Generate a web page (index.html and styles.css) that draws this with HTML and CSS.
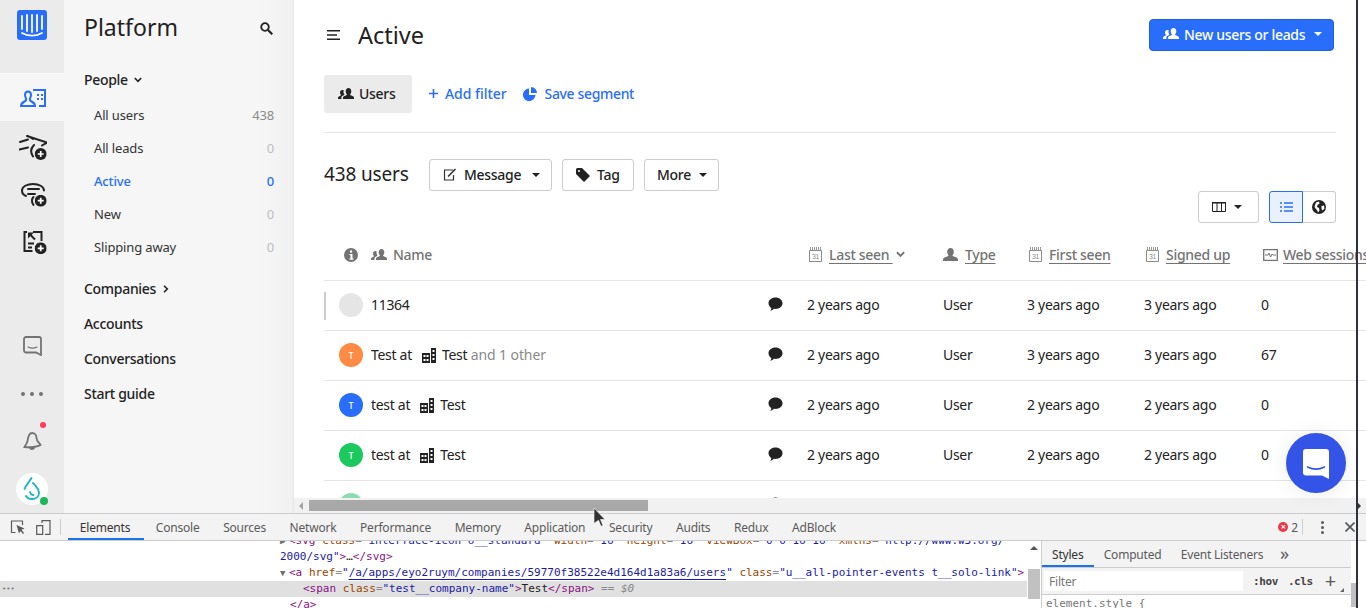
FILE: index.html
```html
<!DOCTYPE html>
<html lang="en">
<head>
<meta charset="utf-8">
<title>Active users</title>
<link rel="stylesheet" href="styles.css">
</head>
<body>
<svg class="defs" width="0" height="0" aria-hidden="true">
  <symbol id="i-users" viewBox="0 0 16 12"><path d="M10.5 0c1.7 0 2.8 1.3 2.8 3.2 0 1.2-.5 2.3-1.2 3 0 .7.4 1 1.2 1.3 1.4.5 2.7 1 2.7 2.3V11H5v-1.2c0-1.3 1.300-1.800 2.700-2.300.8-.3 1.200-.6 1.200-1.300-.7-.7-1.200-1.800-1.200-3C7.700 1.300 8.800 0 10.500 0zM4.300 2c.5 0 1 .1 1.400.4-.5 1.500-.1 3.100.8 4.200-.2.500-1 .8-1.900 1.200C3.500 8.300 3 9.300 3.600 11H0V9.700c0-1 .9-1.400 2-1.800.6-.2.900-.5.900-1C2.300 6.300 2 5.400 2 4.500 2 3 2.900 2 4.300 2z"/></symbol>
  <symbol id="i-cal" viewBox="0 0 13 15"><path fill="none" stroke="currentColor" d="M.5 3.500h12v11H.5z"/><path stroke="currentColor" stroke-width=".9" d="M1.500 0v4M3.500 0v4M5.500 0v4M7.500 0v4M9.500 0v4M11.500 0v4"/><text x="6.500" y="12.300" font-size="7" text-anchor="middle" fill="currentColor" font-family="Liberation Sans">31</text></symbol>
  <symbol id="i-chat" viewBox="0 0 15 15"><path d="M7.500.5c4 0 7 2.500 7 5.700 0 3.200-3 5.700-7 5.700-.6 0-1.100 0-1.600-.1-.9 1-2.200 1.900-3.600 2.200.5-.8 1-1.900 1-3C1.800 10 .5 8.200.5 6.200.5 3 3.500.5 7.500.5z"/></symbol>
  <symbol id="i-building" viewBox="0 0 14 15"><path fill-rule="evenodd" d="M0 5h8v10H0zM1.500 7v2h2V7zM4.500 7v2h2V7zM1.500 11v2h2v-2zM4.500 11v2h2v-2zM9 0h5v15H9zM10.500 2v2h2V2zM10.500 6v2h2V6zM10.500 10v2h2v-2z"/></symbol>
  <symbol id="i-plusbadge" viewBox="0 0 14 14"><circle cx="7" cy="7" r="7"/><path stroke="#fff" stroke-width="2" d="M3.500 7h7M7 3.500v7"/></symbol>
</svg>
<div class="app">
  <nav class="rail">
    <div class="rail-logo">
      <svg class="logo" viewBox="0 0 30 30"><rect width="30" height="30" rx="3" fill="#286efa"/><path stroke="#fff" stroke-width="1.800" stroke-linecap="round" fill="none" d="M5 6v13M10 5v16M15 5v17M20 5v16M25 6v13M5 23c6 3.500 14 3.500 20 0"/></svg>
    </div>
    <div class="rail-item is-current">
      <svg class="rail-icon" viewBox="0 0 26 18" fill="none" stroke="#286efa" stroke-width="2"><path d="M13 1h12v16h-6"/><path d="M1 17c0-2.500 1.500-3.500 3.500-4.500 1.500-.7 2-1.500 1.500-3C5.300 8 5 7 5 6c0-2.500 1.500-3.500 3-3.500S11 3.500 11 6c0 1-.3 2-1 3.500-.5 1.500 0 2.300 1.500 3 2 1 3.500 2 3.500 4.500z"/><path d="M17 6h2M21 6h2M17 10h2M21 10h2"/></svg>
    </div>
    <div class="rail-item">
      <svg class="rail-icon-wide" viewBox="0 0 28 25" fill="none" stroke="#222" stroke-width="2"><path stroke-linecap="round" d="M8 1l20 6.500-5 3M9 1l5 3M1 7l8-2.500M.5 14.500l8.500-2M15 10c-3 3-4 7-1 11.500"/><use href="#i-plusbadge" x="15.700" y="13" width="12" height="12" fill="#222" stroke="none"/></svg>
    </div>
    <div class="rail-item">
      <svg class="rail-icon-wide" viewBox="0 0 28 25" fill="none" stroke="#222" stroke-width="2"><path stroke-linecap="round" d="M7 13C4.500 12 3 10 3 7.500 3 3.500 8 1 14 1s11 2.500 11 6.500M9 6h11M9 11h7M14.500 14c-2 2-2 5 0 8"/><use href="#i-plusbadge" x="15.700" y="11.700" width="12" height="12" fill="#222" stroke="none"/></svg>
    </div>
    <div class="rail-item">
      <svg class="rail-icon-wide" viewBox="0 0 28 25" fill="none" stroke="#222" stroke-width="2"><path d="M8 1H5.500v19h8M14 1h8.500v9"/><path fill="#222" stroke="none" d="M9 1.500h6l-6 6z"/><path d="M11 3.500l5 5M9 12.500h6M9 16.500h4"/><use href="#i-plusbadge" x="15.700" y="11.300" width="12" height="12" fill="#222" stroke="none"/></svg>
    </div>
    <div class="rail-item rail-push">
      <svg class="rail-icon-sm rail-icon-chat" viewBox="0 0 19 20" fill="none" stroke="#737373" stroke-width="1.800"><path d="M3 1h13a2 2 0 0 1 2 2v16l-5-2.500H3a2 2 0 0 1-2-2V3a2 2 0 0 1 2-2z"/><path stroke-linecap="round" stroke-width="1.200" d="M5 11c3 1.500 6 1.500 9 0"/></svg>
    </div>
    <div class="rail-item">
      <div class="dots"><span></span><span></span><span></span></div>
    </div>
    <div class="rail-item">
      <div class="bell">
        <svg class="rail-icon-sm" viewBox="0 0 19 20" fill="none" stroke="#737373" stroke-width="1.800"><path d="M9 2c3 0 4.500 2.500 4.500 5 0 3 3 5 4 7-3 2-11 2.500-16 2 1-2 2.500-3.500 3-6 .4-3 1.500-8 4.500-8z"/><path fill="#737373" stroke="none" d="M6 16.500h6c0 1.500-1.300 2.500-3 2.500s-3-1-3-2.500z"/></svg>
        <span class="bell-dot"></span>
      </div>
    </div>
    <div class="rail-item">
      <div class="me">
        <svg class="me-drop" viewBox="0 0 18 24" fill="none" stroke="#1cb5c4" stroke-width="1.800"><path stroke-linecap="round" d="M8.500 1C7 4 3 8 1.500 12M10 6c3 3 6 6 6 10 0 4-3.500 6-7 6-2.500 0-5-1-6-3M7 15c.5 2 1.500 3 3.500 3"/></svg>
        <span class="me-dot"></span>
      </div>
    </div>
  </nav>
  <aside class="side">
    <div class="side-head">
      <h2 class="side-title">Platform</h2>
      <svg class="side-search" viewBox="0 0 13 13" fill="none" stroke="#222" stroke-width="1.800"><circle cx="5" cy="5" r="3.800"/><path stroke-width="2.200" d="M8 8l4.300 4.300"/></svg>
    </div>
    <div class="side-group side-group-open">People <svg class="chev" viewBox="0 0 8 6"><path fill="none" stroke="#222" stroke-width="1.600" d="M.8 1L4 4.300 7.200 1"/></svg></div>
    <ul class="side-list">
      <li class="side-row"><span>All users</span><span class="count count-strong">438</span></li>
      <li class="side-row"><span>All leads</span><span class="count">0</span></li>
      <li class="side-row is-active"><span>Active</span><span class="count">0</span></li>
      <li class="side-row"><span>New</span><span class="count">0</span></li>
      <li class="side-row"><span>Slipping away</span><span class="count">0</span></li>
    </ul>
    <div class="side-group side-group-first">Companies <svg class="chev chev-right" viewBox="0 0 6 8"><path fill="none" stroke="#222" stroke-width="1.600" d="M1 .8L4.300 4 1 7.200"/></svg></div>
    <div class="side-group">Accounts</div>
    <div class="side-group">Conversations</div>
    <div class="side-group">Start guide</div>
  </aside>
  <main class="main">
    <div class="content">
      <header class="top">
        <svg class="menu" viewBox="0 0 13 10"><path stroke="#222" stroke-width="1.500" d="M0 .8h13M0 5h10M0 9.200h13"/></svg>
        <h1 class="page-title">Active</h1>
        <button class="btn-primary"><svg class="ic-users-w"><use href="#i-users"/></svg>New users or leads<span class="caret caret-white"></span></button>
      </header>
      <div class="filters">
        <div class="pill"><svg class="ic-users"><use href="#i-users"/></svg>Users</div>
        <a class="link link-add"><svg class="ic-plus" viewBox="0 0 9 9"><path stroke="#286efa" stroke-width="1.600" d="M0 4.500h9M4.500 0v9"/></svg>Add filter</a>
        <a class="link link-save"><svg class="ic-pie" viewBox="0 0 14 14"><path fill="#286efa" d="M6 1.500V8h6.500A6.300 6.300 0 1 1 6 1.500zM8 0a6.200 6.200 0 0 1 6 6H8z"/></svg>Save segment</a>
      </div>
      <div class="bar">
        <span class="total">438 users</span>
        <button class="btn btn-message"><svg class="ic-edit" viewBox="0 0 14 13" fill="none" stroke="#333" stroke-width="1.200"><path d="M10 2H1.500v10h9V7"/><path stroke-width="1.600" d="M5 8.500l7.500-7.500"/></svg>Message<span class="caret"></span></button>
        <button class="btn btn-tag"><svg class="ic-tag" viewBox="0 0 14 14"><path fill="#222" fill-rule="evenodd" d="M0 1.500A1.500 1.500 0 0 1 1.500 0H6l8 8-6 6-8-8zM3 2a1 1 0 1 0 0 2 1 1 0 0 0 0-2z"/></svg>Tag</button>
        <button class="btn btn-more">More<span class="caret"></span></button>
      </div>
      <div class="views">
        <button class="btn btn-cols"><svg class="ic-cols" viewBox="0 0 14 10" fill="none" stroke="#222"><path d="M.5.500h13v9H.5zM5 .5v9M9.500.5v9"/><path stroke-width="1.500" d="M0 .8h14"/></svg><span class="caret"></span></button>
        <div class="toggle">
          <span class="toggle-on"><svg class="ic-list" viewBox="0 0 13 10"><path stroke="#286efa" stroke-width="1.500" d="M0 1h2M4 1h9M0 5h2M4 5h9M0 9h2M4 9h9"/></svg></span>
          <span class="toggle-off"><svg class="ic-globe" viewBox="0 0 14 14"><circle cx="7" cy="7" r="7" fill="#222"/><path fill="#fff" d="M4 2.500l3-1 .5 2-2 1.500-.5 2 2 1 .5 2.500-1.500 2-1-2.500-1.500-1.500-1-2zM9.500 6l2.500-.5.500 3-2 2-1-1.500z"/></svg></span>
        </div>
      </div>
      <div class="table">
        <div class="tr th">
          <div class="c-name th-name">
            <svg class="ic-info" viewBox="0 0 14 14"><circle cx="7" cy="7" r="7" fill="#737373"/><path fill="#fff" d="M7 2.200a1.200 1.200 0 1 1 0 2.500 1.200 1.200 0 0 1 0-2.500zM5.500 6h3v4.500h1v1.300h-4v-1.300h1V7.300h-1z"/></svg>
            <svg class="ic-users ic-users-grey"><use href="#i-users"/></svg>Name
          </div>
          <div class="c-chat"></div>
          <div class="c-col"><svg class="ic-cal"><use href="#i-cal"/></svg><u>Last seen&nbsp;</u><svg class="chev chev-th" viewBox="0 0 8 6"><path fill="none" stroke="#737373" stroke-width="1.600" d="M.8 1L4 4.300 7.200 1"/></svg></div>
          <div class="c-col"><svg class="ic-user" viewBox="0 0 15 13"><path fill="#737373" d="M7.500 0c2 0 3.300 1.500 3.300 3.700 0 1.300-.5 2.600-1.300 3.400 0 .8.500 1.100 1.400 1.500C12.700 9.200 15 9.800 15 11.500V13H0v-1.500C0 9.800 2.300 9.200 4.100 8.600c.9-.4 1.400-.7 1.400-1.500-.8-.8-1.300-2.100-1.300-3.400C4.200 1.500 5.500 0 7.500 0z"/></svg><u>Type</u></div>
          <div class="c-col"><svg class="ic-cal"><use href="#i-cal"/></svg><u>First seen</u></div>
          <div class="c-col"><svg class="ic-cal"><use href="#i-cal"/></svg><u>Signed up</u></div>
          <div class="c-col"><svg class="ic-sess" viewBox="0 0 15 12" fill="none" stroke="#737373"><path stroke-width="1.300" d="M.7.700h13.600v10.600H.7z"/><path d="M2 6h3l1-2 1.500 4L9 5l1 1h3"/></svg><u>Web sessions</u></div>
        </div>
        <div class="tr tr-marked">
          <div class="c-name"><span class="av av-empty"></span>11364</div>
          <div class="c-chat"><svg class="ic-chat"><use href="#i-chat"/></svg></div>
          <div>2 years ago</div><div>User</div><div>3 years ago</div><div>3 years ago</div><div>0</div>
        </div>
        <div class="tr">
          <div class="c-name"><span class="av av-orange">T</span>Test at<svg class="ic-bld"><use href="#i-building"/></svg>Test<span class="muted">&nbsp;and 1 other</span></div>
          <div class="c-chat"><svg class="ic-chat"><use href="#i-chat"/></svg></div>
          <div>2 years ago</div><div>User</div><div>3 years ago</div><div>3 years ago</div><div>67</div>
        </div>
        <div class="tr">
          <div class="c-name"><span class="av av-blue">T</span>test at<svg class="ic-bld"><use href="#i-building"/></svg>Test</div>
          <div class="c-chat"><svg class="ic-chat"><use href="#i-chat"/></svg></div>
          <div>2 years ago</div><div>User</div><div>2 years ago</div><div>2 years ago</div><div>0</div>
        </div>
        <div class="tr">
          <div class="c-name"><span class="av av-green">T</span>test at<svg class="ic-bld"><use href="#i-building"/></svg>Test</div>
          <div class="c-chat"><svg class="ic-chat"><use href="#i-chat"/></svg></div>
          <div>2 years ago</div><div>User</div><div>2 years ago</div><div>2 years ago</div><div>0</div>
        </div>
        <div class="tr">
          <div class="c-name"><span class="av av-mint"></span></div>
          <div class="c-chat"><svg class="ic-chat"><use href="#i-chat"/></svg></div>
        </div>
      </div>
    </div>
    <div class="hscroll">
      <span class="hs-left"></span>
      <span class="hs-thumb"></span>
      <span class="hs-right"></span>
    </div>
    <div class="launcher">
      <svg class="launcher-ic" viewBox="0 0 28 32"><path fill="#fff" d="M4 1h20a3 3 0 0 1 3 3v27l-7-3.500H4a3 3 0 0 1-3-3V4a3 3 0 0 1 3-3z"/><path fill="none" stroke="#3354e6" stroke-width="1.600" stroke-linecap="round" d="M5.500 19c5.500 2.800 11.500 2.800 17 0"/></svg>
    </div>
  </main>
</div>
<section class="devtools">
  <div class="dt-tabs">
    <svg class="dt-ic dt-ic-a" viewBox="0 0 14 15" fill="none" stroke="#5a5a5a" stroke-width="1.200"><path d="M5 12.500H1V1h11v4"/><path fill="#5a5a5a" stroke="none" d="M6 5l8 3.500-3 1.200L13.500 13l-1 1-2.500-3-1.500 2.500z"/></svg>
    <svg class="dt-ic dt-ic-b" viewBox="0 0 15 15" fill="none" stroke="#5a5a5a" stroke-width="1.200"><path d="M6 3V.7h8v13.600H9"/><path d="M.7 5.700h6v8.600h-6z"/></svg>
    <span class="dt-sep"></span>
    <span class="dt-tab dt-tab-on">Elements</span>
    <span class="dt-tab">Console</span>
    <span class="dt-tab">Sources</span>
    <span class="dt-tab">Network</span>
    <span class="dt-tab">Performance</span>
    <span class="dt-tab">Memory</span>
    <span class="dt-tab">Application</span>
    <span class="dt-tab">Security</span>
    <span class="dt-tab">Audits</span>
    <span class="dt-tab">Redux</span>
    <span class="dt-tab">AdBlock</span>
    <span class="dt-right">
      <span class="dt-err">×</span><span class="dt-errn">2</span>
      <span class="dt-sep dt-sep-r"></span>
      <span class="dt-kebab"><i></i><i></i><i></i></span>
      <svg class="dt-x" viewBox="0 0 10 10"><path stroke="#555" stroke-width="1.600" d="M.5.500l9 9M9.500.5l-9 9"/></svg>
    </span>
  </div>
  <div class="dt-body">
    <div class="dom">
      <div class="dl"><span class="tw">▶</span><span class="tg">&lt;svg</span> <span class="an">class</span><span class="pn">=</span><span class="av2">"interface-icon o__standard"</span> <span class="an">width</span><span class="pn">=</span><span class="av2">"16"</span> <span class="an">height</span><span class="pn">=</span><span class="av2">"16"</span> <span class="an">viewBox</span><span class="pn">=</span><span class="av2">"0 0 16 16"</span> <span class="an">xmlns</span><span class="pn">=</span><span class="av2">"http://www.w3.org/</span></div>
      <div class="dl"><span class="av2">2000/svg"</span><span class="tg">&gt;</span>…<span class="tg">&lt;/svg&gt;</span></div>
      <div class="dl"><span class="tw">▼</span><span class="tg">&lt;a</span> <span class="an">href</span><span class="pn">=</span><span class="av2">"<u>/a/apps/eyo2ruym/companies/59770f38522e4d164d1a83a6/users</u>"</span> <span class="an">class</span><span class="pn">=</span><span class="av2">"u__all-pointer-events t__solo-link"</span><span class="tg">&gt;</span></div>
      <div class="dl dl-sel"><span class="sel-dots">•••</span><span class="tg">&lt;span</span> <span class="an">class</span><span class="pn">=</span><span class="av2">"test__company-name"</span><span class="tg">&gt;</span>Test<span class="tg">&lt;/span&gt;</span> <span class="eq">== <em>$0</em></span></div>
      <div class="dl dl-close"><span class="tg">&lt;/a&gt;</span></div>
    </div>
    <div class="dom-scroll"><span class="dom-arrow"></span><span class="dom-thumb"></span></div>
    <div class="styles">
      <div class="st-tabs">
        <span class="st-tab st-tab-on">Styles</span>
        <span class="st-tab">Computed</span>
        <span class="st-tab">Event Listeners</span>
        <span class="st-tab st-more">»</span>
      </div>
      <div class="st-filter">
        <span class="st-input">Filter</span>
        <span class="st-btn st-hov">:hov</span>
        <span class="st-btn st-cls">.cls</span>
        <span class="st-plus">+</span>
      </div>
      <div class="st-rule">element.style {</div>
    </div>
    <div class="st-scroll"><span class="st-thumb"></span></div>
  </div>
</section>
<span class="edge-line"></span>
<svg class="pointer" viewBox="0 0 13 20"><path fill="#333" stroke="#fff" stroke-width=".6" d="M1 1l11 11.500H7.500l2.500 6-2 .8-2.500-6L1 16.500z"/></svg>
</body>
</html>
```

FILE: styles.css
```css
* { box-sizing: border-box; }
html, body { margin: 0; height: 100%; }
body {
  width: 1366px;
  height: 608px;
  overflow: hidden;
  position: relative;
  font-family: "Noto Sans", "Open Sans", sans-serif;
  font-size: 14px;
  color: #222;
  background: #fff;
  letter-spacing: -.3px;
}
.defs { position: absolute; }
button { font: inherit; letter-spacing: inherit; color: inherit; cursor: pointer; }
h1, h2, ul { margin: 0; padding: 0; font-weight: 400; }
li { list-style: none; }
u { text-underline-offset: 3px; }

.app { display: flex; height: 513px; }

/* rail */
.rail { width: 64px; flex: none; background: #ebebeb; display: flex; flex-direction: column; }
.rail-logo { height: 73px; padding: 10px 0 0 17px; }
.logo { display: block; width: 30px; height: 30px; }
.rail-item { height: 48px; flex: none; display: flex; align-items: center; justify-content: center; }
.rail-item.is-current { background: #f6f6f6; }
.rail-push { margin-top: auto; }
.rail-icon { width: 26px; height: 18px; display: block; margin: 2px 0 0 2px; }
.rail-icon-wide { width: 28px; height: 25px; display: block; margin: 4px 0 0 2px; }
.rail-icon-sm { width: 19px; height: 20px; display: block; }
.rail-icon-chat { margin-top: 1px; }
.dots { display: flex; gap: 5px; margin-top: 2px; }
.dots span { width: 4px; height: 4px; border-radius: 50%; background: #737373; }
.bell { position: relative; }
.bell-dot { position: absolute; top: -9px; left: 17px; width: 6px; height: 6px; border-radius: 50%; background: #ff3a5c; }
.me { width: 32px; height: 32px; border-radius: 50%; background: #fff; position: relative; display: flex; align-items: center; justify-content: center; }
.me-drop { width: 18px; height: 24px; }
.me-dot { position: absolute; right: 0; bottom: 0; width: 8px; height: 8px; border-radius: 50%; background: #1bb55c; }

/* sidebar */
.side {
  width: 230px;
  flex: none;
  padding: 0 20px;
  background: linear-gradient(to right, #f6f6f6 85%, #f1f1f1 99%, #e6e6e6 100%);
}
.side-head { height: 62px; display: flex; align-items: center; justify-content: space-between; padding: 0 1px 9px 0; }
.side-title { font-size: 23px; letter-spacing: 0; }
.side-search { width: 13px; height: 13px; margin-top: 3px; }
.side-group { height: 35px; display: flex; align-items: center; gap: 6px; font-weight: 500; }
.side-group-first { margin-top: 8px; }
.chev { width: 8px; height: 6px; display: block; }
.chev-right { width: 6px; height: 8px; margin-left: 1px; }
.side-list { margin-top: 1px; padding-left: 10px; }
.side-row { height: 33px; display: flex; align-items: center; justify-content: space-between; font-size: 13px; letter-spacing: -.15px; color: #333; }
.count { color: #bdbdbd; }
.count-strong { color: #8a8a8a; }
.side-row.is-active, .side-row.is-active .count { color: #286efa; font-weight: 500; }

/* main */
.main { flex: 1; min-width: 0; position: relative; display: flex; flex-direction: column; overflow: hidden; }
.content { flex: 1; min-height: 0; overflow: hidden; padding: 0 30px; }
.top { height: 75px; display: flex; align-items: center; padding: 0 2px 5px 3px; }
.menu { width: 13px; height: 10px; margin: 0 18px 0 0; }
.page-title { font-size: 23.500px; letter-spacing: 0; }
.btn-primary {
  margin: 0 0 0 auto;
  height: 32px;
  width: 185px;
  border: 1px solid #1f5fdc;
  border-radius: 4px;
  background: #286efa;
  color: #fff;
  font-weight: 500;
  display: flex;
  align-items: center;
  padding: 0 11px 2px 13px;
  letter-spacing: -.32px;
}
.ic-users-w { width: 16px; height: 12px; fill: #fff; margin-right: 5px; }
.caret { display: inline-block; margin-left: auto; width: 0; height: 0; border: 4px solid transparent; border-top-color: #222; border-bottom: 0; }
.caret-white { border-top-color: #fff; }

.filters { height: 58px; display: flex; align-items: flex-start; border-bottom: 1px solid #e5e5e5; }
.pill { width: 88px; height: 38px; border-radius: 3px; background: #ebebeb; display: flex; align-items: center; gap: 5px; padding: 0 0 1px 14px; font-weight: 500; }
.ic-users { width: 16px; height: 12px; fill: #222; }
.ic-users-grey { fill: #737373; }
.link { height: 38px; display: flex; align-items: center; color: #286efa; font-weight: 500; padding-bottom: 1px; }
.link-add { margin-left: 17px; gap: 7px; letter-spacing: -.05px; }
.link-save { margin-left: 16px; gap: 8px; letter-spacing: -.35px; }
.ic-plus { width: 9px; height: 9px; }
.ic-pie { width: 14px; height: 14px; }

.bar { height: 58px; display: flex; align-items: flex-end; gap: 10px; }
.total { font-size: 19px; width: 95px; letter-spacing: -.15px; line-height: 30px; margin-bottom: 2px; }
.btn { height: 32px; background: #fff; border: 1px solid #ccc; border-radius: 3px; display: flex; align-items: center; font-weight: 500; padding-bottom: 1px; }
.btn-message { width: 123px; padding: 0 11px 1px 13px; gap: 7px; }
.btn-tag { width: 72px; padding: 0 0 1px 13px; gap: 7px; }
.btn-more { width: 75px; padding: 0 11px 1px 12px; }
.ic-edit { width: 14px; height: 13px; }
.ic-tag { width: 14px; height: 14px; }

.views { display: flex; justify-content: flex-end; gap: 10px; height: 32px; }
.btn-cols { width: 61px; padding: 0 16px 0 13px; }
.ic-cols { width: 14px; height: 10px; }
.toggle { display: flex; width: 67px; }
.toggle-on { width: 34px; background: #e9f0fe; border: 1px solid #286efa; border-radius: 3px 0 0 3px; display: flex; align-items: center; justify-content: center; }
.toggle-off { width: 33px; border: 1px solid #ccc; border-left: 0; border-radius: 0 3px 3px 0; display: flex; align-items: center; justify-content: center; }
.ic-list { width: 13px; height: 10px; }
.ic-globe { width: 14px; height: 14px; }

.table { width: 1200px; margin-top: 8px; }
.tr {
  display: grid;
  grid-template-columns: 444px 39px 136px 84px 117px 117px 260px;
  height: 50px;
  padding-bottom: 2px;
  align-items: center;
  border-bottom: 1px solid #e5e5e5;
  white-space: nowrap;
  position: relative;
}
.th { color: #737373; font-weight: 500; }
.th u { text-decoration-thickness: 1px; }
.c-name { display: flex; align-items: center; padding-left: 15px; }
.th-name { padding-left: 20px; }
.ic-info { width: 14px; height: 14px; margin-right: 13px; }
.th-name .ic-users { margin-right: 6px; }
.c-col { display: flex; align-items: center; margin-left: 2px; }
.ic-cal { width: 13px; height: 15px; color: #8c8c8c; margin-right: 7px; flex: none; }
.ic-user { width: 15px; height: 13px; margin-right: 7px; margin-left: -2px; }
.ic-sess { width: 15px; height: 12px; margin-right: 5px; }
.chev-th { margin-left: 3px; width: 9px; height: 7px; }
.c-chat { display: flex; }
.ic-chat { width: 15px; height: 15px; fill: #222; display: block; }
.tr-marked::before { content: ""; position: absolute; left: 0; top: 11px; height: 28px; width: 2px; background: #ccc; }
.av { width: 24px; height: 24px; border-radius: 50%; margin: 1px 8px 0 0; flex: none; display: flex; align-items: center; justify-content: center; color: #fff; font-size: 9px; font-weight: 500; }
.av-empty { background: #e5e5e5; }
.av-orange { background: #ff8a44; }
.av-blue { background: #286efa; }
.av-green { background: #1bc95f; }
.av-mint { background: #8cdcb0; }
.ic-bld { width: 14px; height: 15px; fill: #222; margin: 1px 6px 0 10px; flex: none; }
.muted { color: #8a8a8a; letter-spacing: -.1px; }

.hscroll { height: 15px; flex: none; background: #f1f1f1; display: flex; align-items: center; padding: 0 5px 0 5px; }
.hs-left { width: 0; height: 0; border: 4px solid transparent; border-right-color: #a3a3a3; border-left: 0; }
.hs-thumb { width: 339px; height: 11px; background: #a8a8a8; margin-left: 6px; }
.hs-right { margin-left: auto; width: 0; height: 0; border: 4px solid transparent; border-left-color: #333; border-right: 0; }

.launcher {
  position: absolute;
  left: 992px;
  top: 433px;
  width: 60px;
  height: 60px;
  border-radius: 50%;
  background: #3354e6;
  box-shadow: 0 1px 20px rgba(0, 0, 0, .08);
  display: flex;
  align-items: center;
  justify-content: center;
}
.launcher-ic { width: 28px; height: 32px; margin-top: 2px; }

/* devtools */
.devtools { height: 95px; border-top: 1px solid #ccc; overflow: hidden; font-size: 12px; letter-spacing: -.2px; }
.dt-tabs { height: 27px; background: #f3f3f3; border-bottom: 1px solid #ccc; display: flex; align-items: stretch; color: #5a5a5a; position: relative; z-index: 1; }
.dt-ic { width: 15px; height: 15px; align-self: center; }
.dt-ic-a { margin-left: 10px; }
.dt-ic-b { margin-left: 11px; }
.dt-sep { width: 1px; height: 16px; background: #ccc; align-self: center; margin: 0 0 0 9px; }
.dt-tab { display: flex; align-items: center; padding: 0 11.800px; flex: none; }
.dt-tab-on { color: #333; margin-left: 7px; width: 76px; box-shadow: inset 0 -2px 0 #1a73e8; }
.dt-right { margin-left: auto; display: flex; align-items: center; padding-right: 11px; }
.dt-err { width: 10px; height: 10px; border-radius: 50%; background: #e8384a; color: #fff; font-size: 9px; line-height: 10px; text-align: center; font-weight: 700; }
.dt-errn { margin-left: 3px; }
.dt-sep-r { margin-left: 4px; }
.dt-kebab { display: flex; flex-direction: column; gap: 2px; margin: 0 10px 0 18px; }
.dt-kebab i { width: 3px; height: 3px; border-radius: 50%; background: #5a5a5a; }
.dt-x { width: 10px; height: 10px; margin-left: 11px; }

.dt-body { display: flex; height: 67px; background: #fff; }
.dom { width: 1027px; flex: none; overflow: hidden; font-family: "DejaVu Sans Mono", monospace; font-size: 11px; letter-spacing: 0; padding-left: 280px; line-height: 16px; margin-top: -8px; color: #222; }
.dl { white-space: nowrap; height: 16px; }
.dl-sel { background: #e0e0e0; margin-left: -280px; padding-left: 303px; position: relative; }
.dl-close { padding-left: 10px; }
.sel-dots { position: absolute; left: 2px; color: #777; font-size: 7px; }
.tw { color: #6e6e6e; font-size: 9px; display: inline-block; width: 9px; }
.tg { color: #881280; }
.an { color: #994500; }
.av2 { color: #1a1aa6; }
.pn { color: #888; }
.eq { color: #888; }
.dom-scroll { width: 14px; flex: none; background: #fff; position: relative; }
.dom-arrow { position: absolute; top: 5px; left: 3px; width: 0; height: 0; border: 4px solid transparent; border-bottom-color: #555; border-top: 0; }
.dom-thumb { position: absolute; top: 28px; left: 1px; width: 12px; height: 30px; background: #c1c1c1; }

.styles { flex: 1; min-width: 0; border-left: 1px solid #ccc; background: #f3f3f3; color: #5a5a5a; }
.st-tabs { height: 27px; display: flex; border-bottom: 1px solid #ccc; }
.st-tab { display: flex; align-items: center; padding: 0 9.700px; }
.st-tab-on { width: 52px; color: #333; padding-left: 10px; box-shadow: inset 0 -2px 0 #1a73e8; }
.st-more { font-size: 18px; padding: 0 0 3px 7px; }
.st-filter { height: 27px; display: flex; align-items: center; border-bottom: 1px solid #ccc; padding-left: 2px; position: relative; }
.st-filter::after { content: ""; position: absolute; right: 7px; bottom: 2px; width: 0; height: 0; border: 2px solid #666; border-top-color: transparent; border-left-color: transparent; }
.st-input { width: 199px; height: 20px; background: #fff; color: #777; padding: 2px 5px; }
.st-btn { font-family: "DejaVu Sans Mono", monospace; font-size: 11px; font-weight: 700; color: #444; letter-spacing: -.4px; }
.st-hov { margin-left: 10px; }
.st-cls { margin-left: 10px; }
.st-plus { margin-left: 12px; font-size: 20px; line-height: 1; }
.st-rule { background: #fff; height: 14px; padding-left: 4px; font-family: "DejaVu Sans Mono", monospace; font-size: 11px; letter-spacing: 0; color: #777; line-height: 17px; }
.st-scroll { width: 15px; flex: none; position: relative; background: #fff; }
.st-thumb { position: absolute; left: 0; top: 42px; width: 5px; height: 24px; background: #c1c1c1; }

/* overlays */
.edge-line { position: absolute; left: 1356px; top: 0; width: 2px; height: 608px; background: #2c3040; z-index: 2; }
.pointer { position: absolute; left: 593px; top: 507px; width: 13px; height: 20px; z-index: 2; }
```
